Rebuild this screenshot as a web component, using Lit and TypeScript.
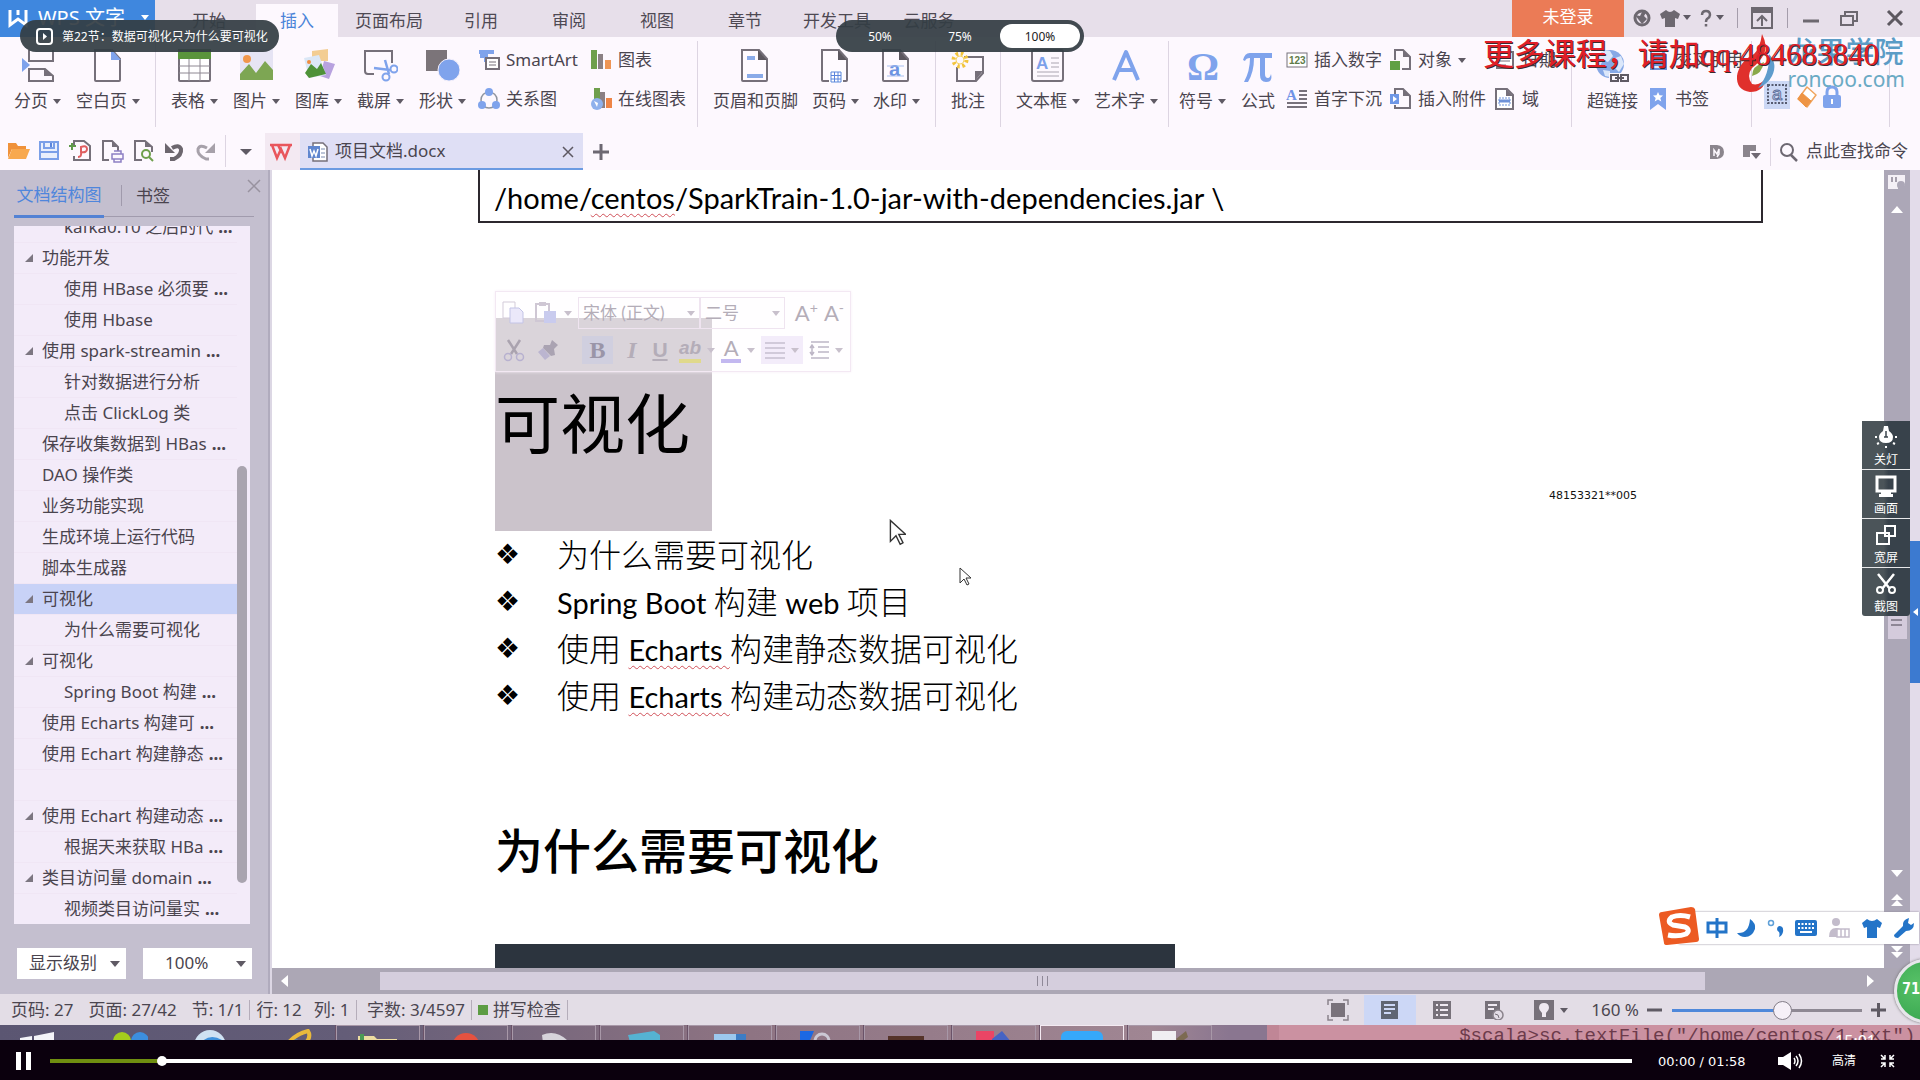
import { LitElement, html, css, svg, nothing, TemplateResult } from "lit";
import { customElement } from "lit/decorators.js";
import { classMap } from "lit/directives/class-map.js";

const pic = (w: number, h: number, body: unknown) =>
  html`<svg class="pic" width=${w} height=${h} viewBox="0 0 ${w} ${h}" fill="none" aria-hidden="true">${body}</svg>`;

const G = "#76707a";
const B = "#7fa3ec";

const page = svg`<path d="M2 1h17l8 9v21q0 1-1 1H3q-1 0-1-1z" fill="#fffaff" stroke=${G} stroke-width="2"/>`;

const big: Record<string, TemplateResult> = {
  split: pic(34, 34, svg`<path d="M8 1v11h24V1M8 32V20h16l8 7v5z" stroke=${G} stroke-width="2"/><path d="M23 20v7h9" fill=${G}/><path d="M1 9l8 7-8 7z" fill=${B}/>`),
  blank: pic(30, 34, svg`${page}<path d="M18 0l10 11H18z" fill=${B}/>`),
  table: pic(34, 34, svg`<rect x="1" y="1" width="31" height="31" rx="1" fill="#fff" stroke=${G} stroke-width="2"/><path d="M0 0h33v10H0z" fill="#5a943c"/><path d="M1 17h31M1 24h31M11 10v22M22 10v22" stroke="#8e8892"/>`),
  image: pic(34, 34, svg`<path d="M0 0h33v31H0z" fill="#e6e4f4"/><circle cx="7" cy="10" r="4" fill="#f0964c"/><path d="M0 31V25l9-10 7 9 9-12 8 9v10z" fill="#7da653"/>`),
  gallery: pic(34, 34, svg`<path d="M10 2l16-2 0 12H10z" fill="#f3cd92"/><path d="M22 12l11 3-6 15-9-3z" fill="#b8a2df"/><path d="M2 9l15-3 7 20-17 3z" fill="#dbe7f6"/><path d="M3 24l6-9 6 5 4-6 5 11-17 4z" fill="#4e9238"/><circle cx="7" cy="13" r="2" fill="#f08c40"/>`),
  snap: pic(34, 34, svg`<path d="M10 25H4q-3 0-3-3V2h27v12" stroke=${G} stroke-width="2"/><path d="M10 19l16 2M21 11l4 14" stroke=${B} stroke-width="2.5"/><circle cx="30" cy="20" r="3.5" stroke=${B} stroke-width="2"/><circle cx="22" cy="28" r="3.5" stroke=${B} stroke-width="2"/>`),
  shapes: pic(34, 34, svg`<path d="M0 1h21v21H0z" fill="#7b7479"/><circle cx="23" cy="21" r="11" fill=${B} stroke="#f5f0fb"/>`),
  header: pic(30, 34, svg`${page}<path d="M18 1v10h9z" fill="#5c575f"/><path d="M7 7h8v4H7zM7 25h16v4H7z" fill="#8aaae8"/>`),
  pageno: pic(30, 34, svg`${page}<path d="M18 1v10h9z" fill="#5c575f"/><path d="M9 21h14v13H9z" fill="#fff"/><path d="M11 23h10v10H11zM14.500 23v10M18 23v10M11 26.500h10M11 30h10" stroke="#5b86dc"/>`),
  water: pic(30, 34, svg`${page}<path d="M18 1v10h9z" fill="#5c575f"/><text x="8" y="27" font-family="Liberation Sans" font-size="20" font-weight="700" fill="#6c93e2">a</text><path d="M6 17h17M6 27h17" stroke="#a9bff0"/>`),
  note: pic(34, 34, svg`<path d="M13 8h19v16l-7 8H6V18" stroke=${G} stroke-width="2"/><path d="M32 22h-8v10z" fill=${G}/><circle cx="9" cy="11" r="6.500" stroke="#f2c43c" stroke-width="4" stroke-dasharray="2.500 2.600"/><circle cx="9" cy="11" r="4" stroke="#f6d568"/>`),
  textbox: pic(34, 34, svg`<rect x="1" y="1" width="31" height="31" rx="2" fill="#fdf8fe" stroke=${G} stroke-width="2"/><text x="5" y="20" font-family="Liberation Sans" font-size="17" font-weight="700" fill="#7da0ea">A</text><path d="M20 9h8M20 14h8M20 18h8M6 23h22M6 27h22" stroke="#aaa4b0"/>`),
  wordart: pic(30, 34, svg`<path d="M3 31L15 3l12 28M8 21h14" stroke=${B} stroke-width="4" stroke-linejoin="round"/>`),
  omega: pic(34, 34, svg`<text x="2" y="31" font-family="Liberation Serif" font-size="40" font-weight="700" fill="#7fa3ec">Ω</text>`),
  pi: pic(34, 34, svg`<path d="M2 11Q4 3 10 4h21v5h-7v16q0 4 3 4 2 0 3-4 2 8-5 8-6 0-6-7V9h-6q0 14-6 24H3Q9 22 9 9 5 9 4 12z" fill=${B}/>`),
  link: pic(34, 34, svg`<circle cx="15" cy="15" r="14" fill="#86a8e6"/><path d="M5 5q6-5 10-3l3 5-5 6-5-2-3 6-3-5zM20 9l6-2 3 8-5 8-5-5zM8 21l7 1 0 6-5-1z" fill="#dbe7fa"/><path d="M14 24h20v10H14z" fill="#fbf6fe"/><path d="M16 26h7v6h-7zM26 26h7v6h-7zM20 29h9" stroke="#5f5a64" stroke-width="2"/>`),
};

const small: Record<string, TemplateResult> = {
  smartart: pic(22, 22, svg`<path d="M1 3h15M8 3v8h6M4 3v6" stroke=${B} stroke-width="4"/><path d="M8 9h13v11H8z" fill="#fff" stroke=${G} stroke-width="2"/><path d="M11 13h7M11 16h7" stroke=${G}/>`),
  relation: pic(22, 22, svg`<circle cx="11" cy="12" r="8" stroke="#8f959f" stroke-width="1.500"/><circle cx="11" cy="4" r="4" fill=${B}/><circle cx="4" cy="17" r="4" fill=${B}/><circle cx="18" cy="17" r="4" fill=${B}/>`),
  chart: pic(22, 22, svg`<path d="M1 1h6v19H1z" fill="#6f9f4c"/><path d="M8 5h5v15H8z" fill="#8b8084"/><path d="M15 11h6v9h-6z" fill="#ee9555"/>`),
  online: pic(22, 22, svg`<path d="M4 0h6v11H4z" fill="#6f9f4c"/><path d="M10 4h5v16h-5z" fill="#8b8084"/><path d="M16 10h6v10h-6z" fill="#ee8547"/><circle cx="7" cy="16" r="6" fill="#8fb1ec"/><path d="M4 13l4 2-1 4z" fill="#fff"/>`),
  num: pic(22, 22, svg`<rect x="1" y="4" width="20" height="14" fill="#fff" stroke=${G}/><text x="3" y="15" font-family="Liberation Sans" font-size="10" font-weight="700" fill="#5e7b48">123</text>`),
  drop: pic(22, 22, svg`<text x="0" y="12" font-family="Liberation Serif" font-size="15" font-weight="700" fill="#6f93e6">A</text><path d="M13 3h8M13 7h8M13 11h8M1 15h20M1 19h20" stroke="#77717b" stroke-width="2"/>`),
  object: pic(22, 22, svg`<path d="M5 11V1h8l7 7v12h-8" stroke=${G} stroke-width="2"/><path d="M13 1v7h7z" fill=${G}/><path d="M0 12h10v9H0z" fill="#5fa044"/>`),
  attach: pic(22, 22, svg`<path d="M5 6V1h8l7 7v12H5v-3" stroke=${G} stroke-width="2"/><path d="M13 1v7h7z" fill=${G}/><path d="M0 6h9v10H0z" fill="#6f97e6"/><path d="M3 8l4 3-4 3z" fill="#fff"/>`),
  date: pic(22, 22, svg`<rect x="3" y="3" width="16" height="16" fill="#fff" stroke=${G} stroke-width="2"/><path d="M6 8h10M6 12h10M6 16h6" stroke=${G}/>`),
  field: pic(22, 22, svg`<path d="M2 1h11l6 6v14H2z" fill="#fff" stroke=${G} stroke-width="2"/><path d="M12 1v7h7z" fill=${G}/><path d="M5 10h11v7H5z" stroke="#6d91d8" stroke-dasharray="2 1"/><path d="M5 13h11" stroke="#6d91d8" stroke-width="3"/>`),
  xref: pic(22, 22, svg`<path d="M4 1h10l5 5v14H4z" fill="#e7edfb" stroke="#6d91d8" stroke-width="2"/><path d="M7 8h9M7 12h9M7 16h9" stroke="#6d91d8" stroke-width="2"/>`),
  mark: pic(22, 22, svg`<path d="M3 0h16v22l-8-6-8 6z" fill=${B}/><path d="M11 4l1.500 3.300 3.500.3-2.700 2.300 1 3.600-3.300-2-3.300 2 1-3.600L6 7.600l3.500-.3z" fill="#fff"/>`),
  shade: pic(26, 28, svg`<path d="M0 0h26v28H0z" fill="#ccd8f5"/><rect x="4" y="4" width="18" height="18" stroke="#565b70" stroke-width="2" stroke-dasharray="2 1.500"/><text x="8" y="19" font-family="Liberation Sans" font-size="18" fill="#fff" stroke="#5c6f9e" stroke-width="1">a</text>`),
  eraser: pic(22, 24, svg`<path d="M12 2l9 8-9 12-9-8z" fill="#fff" stroke="#f0a45e" stroke-width="1.500" stroke-linejoin="round"/><path d="M7 8l9 8-5 6-8-8z" fill="#ee9444" stroke="#ee9444" stroke-linejoin="round"/>`),
  lock: pic(20, 24, svg`<path d="M5 11V7q0-5 5-5t5 5v4" stroke=${B} stroke-width="3"/><rect x="1" y="10" width="18" height="13" rx="2" fill=${B}/><path d="M9 14h2v5H9z" fill="#fff"/>`),
};

const quick: [string, TemplateResult][] = [
  ["打开", pic(24, 24, svg`<path d="M2 4h8l2 3h8v3H6L2 19z" fill="#f0923a"/><path d="M6 10h18l-4 10H2z" fill="#f8a94f"/>`)],
  ["保存", pic(22, 24, svg`<rect x="2" y="3" width="18" height="17" stroke="#7ba0e8" stroke-width="2" fill="#eaf0fc"/><path d="M6 3h10v6H6zM3 13h16" stroke="#7ba0e8" stroke-width="2"/><path d="M12 4h2v4h-2z" fill="#5b86dc"/>`)],
  ["输出为PDF", pic(24, 24, svg`<path d="M6 8V2h10l6 5v14H6v-4" stroke=${G} stroke-width="2"/><path d="M1 7h7M4 4v7" stroke="#5f9a4a" stroke-width="2"/><path d="M10 18q4 0 3-5V8q6-2 6 2 0 4-6 3" stroke="#df5d60" stroke-width="2"/>`)],
  ["打印", pic(24, 24, svg`<path d="M9 21H3V2h9l6 6v4" stroke=${G} stroke-width="2"/><path d="M12 2v6h6z" fill=${G}/><path d="M12 15h11v5H12zM14 12h7v3M14 20h7v3h-7z" stroke="#8d7fc4" stroke-width="1.500"/>`)],
  ["打印预览", pic(24, 24, svg`<path d="M10 21H3V2h10l7 6v5" stroke=${G} stroke-width="2"/><path d="M13 2v6h7z" fill=${G}/><circle cx="14" cy="15" r="4" stroke="#6fa04c" stroke-width="2"/><path d="M17 18l4 4" stroke="#6fa04c" stroke-width="2"/>`)],
  ["撤销", pic(22, 24, svg`<path d="M6 20h4q8-4 7-10-2-5-9-1" stroke="#6c666e" stroke-width="4"/><path d="M1 4v10h10z" fill="#6c666e"/>`)],
  ["重做", pic(22, 24, svg`<path d="M15 20h-3q-9-4-8-10 2-5 9-1" stroke="#a7a1aa" stroke-width="3"/><path d="M21 4v10H11z" fill="#a7a1aa"/>`)],
];

interface OutlineRow { t: string; lvl: number; open?: boolean; more?: boolean; sel?: boolean; }
const outline: OutlineRow[] = [
  { t: "kafka0.10 之后的代", lvl: 2, more: true },
  { t: "功能开发", lvl: 1, open: true },
  { t: "使用 HBase 必须要", lvl: 2, more: true },
  { t: "使用 Hbase", lvl: 2 },
  { t: "使用 spark-streamin", lvl: 1, open: true, more: true },
  { t: "针对数据进行分析", lvl: 2 },
  { t: "点击 ClickLog 类", lvl: 2 },
  { t: "保存收集数据到 HBas", lvl: 1, more: true },
  { t: "DAO 操作类", lvl: 1 },
  { t: "业务功能实现", lvl: 1 },
  { t: "生成环境上运行代码", lvl: 1 },
  { t: "脚本生成器", lvl: 1 },
  { t: "可视化", lvl: 1, open: true, sel: true },
  { t: "为什么需要可视化", lvl: 2 },
  { t: "可视化", lvl: 1, open: true },
  { t: "Spring Boot 构建", lvl: 2, more: true },
  { t: "使用 Echarts 构建可", lvl: 1, more: true },
  { t: "使用 Echart 构建静态", lvl: 1, more: true },
  { t: "", lvl: 1 },
  { t: "使用 Echart 构建动态", lvl: 1, open: true, more: true },
  { t: "根据天来获取 HBa", lvl: 2, more: true },
  { t: "类目访问量 domain", lvl: 1, open: true, more: true },
  { t: "视频类目访问量实", lvl: 2, more: true },
];

const base = css`
  * { box-sizing: border-box; }
  :host { display: block; }
  button { font: inherit; color: inherit; background: none; border: 0; padding: 0; margin: 0; white-space: nowrap; }
  ul { list-style: none; margin: 0; padding: 0; }
  .pic { display: block; flex: none; }
  .caret { flex: none; width: 0; height: 0; border: 4px solid transparent; border-top: 5px solid #5f5a64; border-bottom: 0; }
`;

@customElement("title-bar")
class TitleBar extends LitElement {
  static styles = [base, css`
    .bar { display: flex; height: 37px; background: #e7dfea; color: #4e4953; }
    .brand { width: 155px; flex: none; background: #3f87de; color: #fff; display: flex; align-items: center; gap: 8px; padding: 0 6px 2px 8px; font-size: 20px; }
    .brand .caret { border-top-color: #fff; margin-left: auto; }
    .tabs { display: flex; gap: 6px; margin-left: 13px; padding-top: 4px; flex: 1; }
    .tab { min-width: 82px; padding: 2px 11px 0; text-align: center; }
    .on { background: #fdf8fe; color: #4a83d8; }
    .login { width: 112px; background: #eb7b56; color: #fff; padding-bottom: 3px; }
    .tools { display: flex; align-items: center; padding: 0 16px 2px 8px; }
    .tools button { display: flex; align-items: center; gap: 3px; }
    .a { margin-left: 12px; } .b { margin-left: 14px; } .c { margin-left: 8px; }
    .vsep { width: 1px; height: 20px; background: #a59dab; margin-left: 13px; }
    .gap { margin-left: 20px; } .wide { margin-left: 28px; }
  `];
  render() {
    const tabs = ["开始", "插入", "页面布局", "引用", "审阅", "视图", "章节", "开发工具", "云服务"];
    return html`<header class="bar">
      <button class="brand">${pic(22, 20, svg`<path d="M2 2v15l8-6 8 6V2M10 2v5" stroke="#fff" stroke-width="3"/>`)}<span>WPS 文字</span><i class="caret"></i></button>
      <nav class="tabs">${tabs.map((t, i) => html`<button class=${classMap({ tab: true, on: i === 1 })}>${t}</button>`)}</nav>
      <button class="login">未登录</button>
      <div class="tools">
        <button aria-label="云同步">${pic(20, 20, svg`<circle cx="10" cy="10" r="7" stroke="#6d6870" stroke-width="3"/><path d="M3 7l5 1 2-4 5-1-3 5 3 3-5 5z" fill="#6d6870"/>`)}</button>
        <button class="c" aria-label="皮肤">${pic(20, 20, svg`<path d="M6 2q4 4 8 0l6 4-2 5-3-1v9H5v-9l-3 1-2-5z" fill="#6d6870"/>`)}<i class="caret"></i></button>
        <button class="c" aria-label="帮助">${pic(14, 20, svg`<path d="M3 7q0-4 4-4t4 4q0 2-3 4-1 1-1 3M7 16v2.500" stroke="#6d6870" stroke-width="2.500"/>`)}<i class="caret"></i></button>
        <i class="vsep"></i>
        <button class="a" aria-label="隐藏功能区">${pic(24, 24, svg`<rect x="2" y="2" width="20" height="20" stroke="#6d6870" stroke-width="2"/><path d="M2 2h20v5H2z" fill="#6d6870"/><path d="M12 20V11M7 15l5-5 5 5" stroke="#6d6870" stroke-width="2"/>`)}</button>
        <i class="vsep"></i>
        <button class="b" aria-label="最小化">${pic(18, 20, svg`<path d="M1 13h16" stroke="#6d6870" stroke-width="3"/>`)}</button>
        <button class="gap" aria-label="还原">${pic(18, 20, svg`<path d="M5 7V4h12v9h-4M1 8h12v9H1z" stroke="#6d6870" stroke-width="2"/>`)}</button>
        <button class="wide" aria-label="关闭">${pic(18, 20, svg`<path d="M2 3l14 14M16 3L2 17" stroke="#5d5860" stroke-width="3"/>`)}</button>
      </div>
    </header>`;
  }
}

@customElement("ribbon-bar")
class RibbonBar extends LitElement {
  static styles = [base, css`
    .ribbon { display: flex; height: 96px; background: #fdf8fe; color: #4a454f; padding: 4px 0 6px 14px; }
    .grp { display: flex; gap: 15px; padding-right: 15px; margin-right: 15px; border-right: 1px solid #ddd5e2; flex: none; }
    .snug { gap: 14px; }
    .tight { padding-right: 10px; margin-right: 10px; gap: 14px; }
    .nosep { border: 0; margin: 0; padding-right: 11px; }
    .close { gap: 12px; padding-right: 12px; margin-right: 12px; }
    .big { display: flex; flex-direction: column; align-items: center; gap: 6px; padding-top: 8px; justify-content: flex-start; }
    .lab { display: flex; align-items: center; gap: 5px; line-height: 24px; }
    .cols { display: grid; grid-template-rows: 38px 40px; grid-auto-flow: column; column-gap: 12px; align-content: start; margin: 0 -4px 0 -3px; }
    .sm { display: flex; align-items: center; gap: 6px; }
    .flush { margin: 0; column-gap: 8px; }
    .icons { display: flex; gap: 5px; align-items: flex-end; padding-bottom: 18px; margin-right: 32px; }
  `];
  big(name: string, label: string, caret = true) {
    return html`<button class="big">${big[name]}<span class="lab">${label}${caret ? html`<i class="caret"></i>` : nothing}</span></button>`;
  }
  sm(name: string, label: string, caret = false) {
    return html`<button class="sm">${small[name]}<span>${label}</span>${caret ? html`<i class="caret"></i>` : nothing}</button>`;
  }
  render() {
    return html`<section class="ribbon">
      <div class="grp">${this.big("split", "分页")}${this.big("blank", "空白页")}</div>
      <div class="grp">${this.big("table", "表格")}${this.big("image", "图片")}${this.big("gallery", "图库")}${this.big("snap", "截屏")}${this.big("shapes", "形状")}
        <div class="cols">${this.sm("smartart", "SmartArt")}${this.sm("relation", "关系图")}${this.sm("chart", "图表")}${this.sm("online", "在线图表")}</div></div>
      <div class="grp snug">${this.big("header", "页眉和页脚", false)}${this.big("pageno", "页码")}${this.big("water", "水印")}</div>
      <div class="grp">${this.big("note", "批注", false)}</div>
      <div class="grp tight">${this.big("textbox", "文本框")}${this.big("wordart", "艺术字")}</div>
      <div class="grp nosep">${this.big("omega", "符号")}${this.big("pi", "公式", false)}</div>
      <div class="grp snug"><div class="cols flush">${this.sm("num", "插入数字")}${this.sm("drop", "首字下沉")}${this.sm("object", "对象", true)}${this.sm("attach", "插入附件")}${this.sm("date", "日期")}${this.sm("field", "域")}</div></div>
      <div class="grp close">${this.big("link", "超链接", false)}<div class="cols">${this.sm("xref", "交叉引用")}${this.sm("mark", "书签")}</div></div>
      <div class="grp"><div class="icons"><button aria-label="字符底纹">${small.shade}</button><button aria-label="清除">${small.eraser}</button><button aria-label="保护">${small.lock}</button></div></div>
    </section>`;
  }
}

@customElement("file-tabs")
class FileTabs extends LitElement {
  static styles = [base, css`
    .row { display: flex; align-items: stretch; height: 37px; background: #fdf8fe; color: #4a454f; }
    .quick { display: flex; align-items: center; gap: 8px; padding: 0 10px 0 6px; border-right: 1px solid #ddd5e2; margin: 2px 0 3px; width: 226px; flex: none; }
    .more { width: 39px; display: flex; align-items: center; justify-content: center; flex: none; }
    .more .caret { border-width: 6px 6px 0; }
    .home { width: 35px; background: #f3e9f2; display: flex; align-items: center; padding-left: 4px; flex: none; }
    .doc { width: 283px; flex: none; display: flex; align-items: center; gap: 7px; padding: 2px 8px 0; background: #dfdff5; border-bottom: 2px solid #6b9be2; }
    .doc .x { margin-left: auto; }
    .plus { margin-left: 9px; }
    .right { margin-left: auto; display: flex; align-items: center; padding-right: 12px; }
    .flag { margin-left: 18px; }
    .find { display: flex; align-items: center; gap: 8px; border-left: 1px solid #ddd5e2; margin-left: 9px; padding-left: 8px; height: 28px; }
  `];
  render() {
    return html`<div class="row">
      <div class="quick">${quick.map(([n, p]) => html`<button aria-label=${n}>${p}</button>`)}</div>
      <button class="more" aria-label="更多"><i class="caret"></i></button>
      <button class="home" aria-label="首页">${pic(24, 20, svg`<path d="M3 3l5 13 4-9 4 9 5-13M1 3h22M9 3l4 8" stroke="#e9565c" stroke-width="2.500"/>`)}</button>
      <div class="doc">${pic(20, 22, svg`<path d="M5 2h10l4 4v14H5z" fill="#fff" stroke=${G} stroke-width="1.500"/><path d="M13 8h4M13 12h4M13 16h4" stroke="#7b8cb0"/><path d="M0 5h12v12H0z" fill="#5f86cf"/><path d="M2 8l2 7 2-5 2 5 2-7" stroke="#fff" stroke-width="1.500"/>`)}<span>项目文档.docx</span>
        <button class="x" aria-label="关闭文档">${pic(14, 14, svg`<path d="M2 2l10 10M12 2L2 12" stroke="#5d5862" stroke-width="1.500"/>`)}</button></div>
      <button class="plus" aria-label="新建">${pic(18, 18, svg`<path d="M9 1v16M1 9h16" stroke="#6d6872" stroke-width="3"/>`)}</button>
      <div class="right">
        <button aria-label="稻壳">${pic(16, 18, svg`<path d="M1 2h7q7 1 7 7t-7 7H1z" fill="#8b858d"/><path d="M5 13V7l3 4 2-5v5l-2 3" stroke="#fdf8fe" stroke-width="1.500"/>`)}</button>
        <button class="flag" aria-label="窗口">${pic(18, 18, svg`<path d="M0 2h13v6H7v6H0z" fill="#8b858d"/><path d="M8 10h10l-5 6z" fill="#6f6973"/>`)}</button>
        <button class="find">${pic(19, 20, svg`<circle cx="8" cy="8" r="6" stroke="#6d6872" stroke-width="2"/><path d="M12 13l6 6" stroke="#6d6872" stroke-width="2.500"/>`)}<span>点此查找命令</span></button>
      </div>
    </div>`;
  }
}

@customElement("outline-panel")
class OutlinePanel extends LitElement {
  static styles = [base, css`
    :host { flex: none; display: flex; }
    .side { width: 272px; display: flex; flex-direction: column; background: #c4bfcf; color: #4a444e; border-right: 2px solid #dcd7e4; padding: 8px 4px 15px 14px; box-shadow: inset -2px 0 0 #b0abbd; }
    .head { display: flex; align-items: flex-start; height: 37px; margin-right: 11px; }
    .t { height: 37px; padding: 0 2px 2px; }
    .cur { color: #4f86dc; width: 90px; }
    .mid { border-left: 1px solid #a09aac; margin: 7px 0 0 17px; padding-left: 14px; height: 21px; line-height: 21px; }
    .close { margin-left: auto; margin-right: -7px; }
    .rule { height: 3px; background: linear-gradient(#a19bad, #a19bad) 0 1px / 100% 1px no-repeat; margin-right: 12px; flex: none; }
    .rule i { display: block; width: 90px; height: 3px; background: #5382d4; }
    .box { flex: 1; min-height: 0; margin: 8px 0 24px; width: 236px; background: #f3ebf9; overflow: hidden; display: flex; }
    .list { flex: 1; margin-top: -14px; }
    .row { height: 31px; display: flex; align-items: center; gap: 9px; padding-left: 11px; white-space: nowrap; border-bottom: 1px solid #f0e6f5; }
    .row button { display: flex; gap: 5px; }
    .mark { width: 0; height: 0; border-left: 8px solid transparent; border-bottom: 8px solid transparent; }
    .open { border-bottom-color: #7c7681; }
    .two { padding-left: 33px; }
    .sel { background: #c8d2f7; }
    .dots { font-weight: 700; }
    .rail { width: 13px; padding: 240px 3px 41px 0; flex: none; display: flex; }
    .thumb { flex: 1; border-radius: 5px; background: #a9a4af; }
    .foot { display: flex; gap: 17px; padding-left: 3px; flex: none; }
    .sel-box { position: relative; width: 109px; height: 31px; background: #fff; display: flex; }
    .sel-box select { appearance: none; border: 0; background: none; font: inherit; color: inherit; flex: 1; padding: 0 12px; }
    .num select { padding-left: 22px; }
    .sel-box .caret { position: absolute; right: 6px; top: 13px; border-width: 6px 5px 0; }
  `];
  render() {
    return html`<aside class="side">
      <div class="head"><button class="t cur">文档结构图</button><button class="mid">书签</button>
        <button class="close" aria-label="关闭窗格">${pic(16, 16, svg`<path d="M2 2l12 12M14 2L2 14" stroke="#98929f" stroke-width="1.500"/>`)}</button></div>
      <div class="rule"><i></i></div>
      <div class="box">
        <ul class="list">${outline.map(r => html`<li class=${classMap({ row: true, two: r.lvl === 2, sel: !!r.sel })}>
          <i class=${classMap({ mark: true, open: !!r.open })}></i><button>${r.t}${r.more ? html`<span class="dots">...</span>` : nothing}</button></li>`)}</ul>
        <div class="rail"><i class="thumb"></i></div>
      </div>
      <div class="foot">
        <label class="sel-box"><select aria-label="显示级别"><option>显示级别</option></select><i class="caret"></i></label>
        <label class="sel-box num"><select aria-label="缩放"><option>100%</option></select><i class="caret"></i></label>
      </div>
    </aside>`;
  }
}

@customElement("mini-toolbar")
class MiniToolbar extends LitElement {
  static styles = [base, css`
    .mini { width: 356px; background: rgba(255, 252, 255, .3); border: 1px solid #f3e8f3; color: #b4adb8; padding: 4px 6px; display: flex; flex-direction: column; gap: 3px; box-shadow: 0 0 3px #f7eef7; }
    .r { display: flex; align-items: center; height: 34px; gap: 6px; }
    .f { display: flex; align-items: center; justify-content: space-between; height: 32px; border: 1px solid #efe4f0; padding: 0 4px; }
    .f1 { width: 124px; } .f2 { width: 86px; margin-left: -6px; }
    .caret { border-top-color: #c8c0cc; }
    .sp { margin-left: 4px; }
    .b { width: 31px; height: 28px; font: 700 24px "Liberation Serif", serif; background: rgba(200, 202, 228, .55); color: #9a95a8; margin: 0 1px 0 16px; }
    .i { width: 24px; font: italic 700 24px "Liberation Serif", serif; }
    .u { width: 20px; font: 700 21px "Liberation Sans", sans-serif; text-decoration: underline; }
    .al { display: flex; align-items: center; gap: 6px; background: #f3ecfa; padding: 3px 4px; height: 28px; }
    .A { font-size: 22px; }
    .A sup { font-size: 14px; line-height: 1; }
    .fc { border-bottom: 4px solid #c3b8f0; line-height: 22px; width: 20px; font-size: 22px; }
    .hl { border-bottom: 4px solid #e0d98c; line-height: 20px; font: italic 700 19px "Liberation Sans", sans-serif; margin-left: 3px; }
  `];
  render() {
    return html`<div class="mini">
      <div class="r">
        <button aria-label="复制">${pic(22, 24, svg`<path d="M1 1h12v16H1z" stroke="#d3cbd9"/><path d="M8 7h9l4 4v11H8z" fill="#ebe8fa" stroke="#c3c4e6"/>`)}</button>
        <button class="sp" aria-label="粘贴">${pic(24, 24, svg`<path d="M2 3h13v17H2z" stroke="#cfc7d4" stroke-width="2"/><path d="M5 1h7v4H5z" fill="#cfc7d4"/><path d="M10 10h12v12H10z" fill="#c9cbee"/>`)}</button><i class="caret"></i>
        <button class="f f1"><span>宋体 (正文)</span><i class="caret"></i></button>
        <button class="f f2"><span>二号</span><i class="caret"></i></button>
        <button class="A sp">A<sup>+</sup></button><button class="A">A<sup>-</sup></button>
      </div>
      <div class="r">
        <button aria-label="剪切">${pic(24, 24, svg`<path d="M6 2l9 14M18 2L9 16" stroke="#aaa3af" stroke-width="2.500"/><circle cx="6" cy="19" r="3.500" stroke="#b7b1cf" stroke-width="1.500"/><circle cx="18" cy="19" r="3.500" stroke="#b7b1cf" stroke-width="1.500"/>`)}</button>
        <button class="sp" aria-label="格式刷">${pic(24, 24, svg`<path d="M16 2l6 5-4 4 1 6-4 1-8-8 1-3 6 0z" fill="#aaa3b2"/><path d="M7 10l7 8-5 4-7-8z" fill="#bbb5d0"/>`)}</button>
        <button class="b">B</button><button class="i">I</button><button class="u">U</button>
        <button class="hl">ab</button><i class="caret"></i>
        <button class="fc">A</button><i class="caret"></i>
        <button class="al" aria-label="对齐">${pic(20, 18, svg`<path d="M0 2h20M0 7h20M0 12h20M0 17h20" stroke="#c6bfd0" stroke-width="1.500"/>`)}<i class="caret"></i></button>
        <button aria-label="行距">${pic(20, 20, svg`<path d="M2 2h18M9 7h11M9 12h11M2 18h18M3 5v9M1 8l2-3 2 3M1 12l2 3 2-3" stroke="#bdb6c6" stroke-width="1.500"/>`)}</button><i class="caret"></i>
      </div>
    </div>`;
  }
}

@customElement("doc-view")
class DocView extends LitElement {
  static styles = [base, css`
    :host { flex: 1; min-width: 0; display: flex; }
    .view { flex: 1; min-width: 0; display: grid; grid-template-columns: minmax(0, 1fr) 26px; grid-template-rows: minmax(0, 1fr) 26px; }
    .paper { position: relative; background: #fff; overflow: hidden; color: #000; padding: 0 121px 0 206px; font-family: Lato, "Noto Sans CJK SC", sans-serif; }
    .cell { height: 53px; border: 2px solid #2c282e; border-top: 0; padding: 5px 0 0 14px; font-size: 29px; line-height: 46px; white-space: nowrap; }
    .bad { text-decoration: underline wavy #d05058 1px; text-underline-offset: 4px; }
    .h1 { margin: 95px 0 0 17px; width: 217px; height: 213px; background: #cbc3cb; font: 400 65px "Noto Sans CJK SC", sans-serif; line-height: 205px; white-space: nowrap; }
    .items { margin-left: 17px; font-size: 32px; }
    .items li { display: flex; align-items: center; height: 47px; white-space: pre; }
    .dot { width: 62px; font: 28px "DejaVu Sans", sans-serif; }
    .cn { font-weight: 300; }
    .la { font-size: 29px; font-weight: 400; }
    .h2 { margin: 99px 0 66px 17px; font: 500 48px "Noto Sans CJK SC", sans-serif; line-height: 60px; }
    .fig { margin-left: 17px; width: 680px; height: 60px; background: #2c343e; }
    .mini { position: absolute; left: 223px; top: 121px; }
    .cursor { position: absolute; left: 617px; top: 349px; }
    .cursor.sm { left: 687px; top: 397px; }
    .vs { display: flex; flex-direction: column; align-items: center; background: #aca7b7; padding: 5px 0 0; }
    .tri { width: 0; height: 0; border: 6px solid transparent; }
    .up { border-bottom: 7px solid #fff; border-top: 0; }
    .dn { border-top: 7px solid #fff; border-bottom: 0; }
    .vthumb { margin-top: auto; width: 19px; height: 60px; background: #d4cbdc; display: flex; align-items: flex-end; justify-content: center; padding-bottom: 12px; }
    .m1 { margin-top: 15px; } .m2 { margin-top: 231px; } .m3 { margin-top: 16px; } .m4 { margin: 38px 0 9px; }
    .hs { grid-column: 1 / -1; display: flex; align-items: center; background: #aca7b5; padding: 0 36px 0 9px; }
    .l { border-right: 7px solid #fff; border-left: 0; }
    .r { border-left: 7px solid #fff; border-right: 0; margin-left: auto; }
    .hthumb { margin-left: 92px; flex: 0 1 1325px; height: 18px; background: #d5cedd; display: flex; gap: 4px; align-items: center; justify-content: center; }
    .hthumb i { width: 1px; height: 10px; background: #8f8998; }
  `];
  render() {
    const arrow = (s: number) => pic(12 * s, 20 * s, svg`<path transform="scale(${s})" d="M1 1v15l4-4 3 6 2-1-3-6h5z" fill="#fff" stroke="#333" stroke-width="1"/>`);
    const dbl = (d: string) => pic(12, 14, svg`<path d=${d} fill="#fff"/>`);
    return html`<div class="view">
      <main class="paper">
        <div class="cell">/home/<span class="bad">centos</span>/SparkTrain-1.0-jar-with-dependencies.jar \\</div>
        <h1 class="h1">可视化</h1>
        <ul class="items">
          <li><span class="dot">❖</span><span class="cn">为什么需要可视化</span></li>
          <li><span class="dot">❖</span><span class="cn"><span class="la">Spring Boot </span>构建<span class="la"> web </span>项目</span></li>
          <li><span class="dot">❖</span><span class="cn">使用<span class="la"> <span class="bad">Echarts </span></span>构建静态数据可视化</span></li>
          <li><span class="dot">❖</span><span class="cn">使用<span class="la"> <span class="bad">Echarts </span></span>构建动态数据可视化</span></li>
        </ul>
        <h2 class="h2">为什么需要可视化</h2>
        <div class="fig"></div>
        <mini-toolbar class="mini"></mini-toolbar>
        <div class="cursor">${arrow(1.4)}</div>
        <div class="cursor sm">${arrow(1)}</div>
      </main>
      <div class="vs">
        ${pic(18, 16, svg`<path d="M0 0h17v14H0z" fill="#f4f0f6"/><path d="M4 2v5M8 2v5" stroke="#8a8494" stroke-width="1.500"/><circle cx="13" cy="10" r="4" fill="#aca7b7"/><path d="M10 11h8v5h-8z" fill="#aca7b7"/>`)}
        <i class="tri up m1"></i>
        <i class="vthumb">${pic(12, 8, svg`<path d="M0 1h11M0 6h11" stroke="#77717f" stroke-width="1.500"/>`)}</i>
        <i class="tri dn m2"></i>
        <i class="m3">${dbl("M6 1l6 6H0zM6 7l6 6H0z")}</i>
        <i class="m4">${dbl("M0 1h12L6 7zM0 7h12l-6 6z")}</i>
      </div>
      <div class="hs"><i class="tri l"></i><div class="hthumb"><i></i><i></i><i></i></div><i class="tri r"></i></div>
    </div>`;
  }
}

@customElement("status-bar")
class StatusBar extends LitElement {
  static styles = [base, css`
    .bar { display: flex; align-items: center; height: 31px; background: #e3dde6; color: #4b4650; padding: 1px 34px 0 11px; white-space: pre; }
    .s { border-right: 1px solid #b5adba; height: 20px; line-height: 20px; padding-right: 6px; margin-right: 6px; display: flex; gap: 12px; align-items: center; }
    .wide { gap: 15px; }
    .sp { gap: 5px; }
    .ok { width: 10px; height: 10px; background: #5d9c44; }
    .r { margin-left: auto; display: flex; align-items: center; height: 100%; }
    .view { width: 52px; height: 31px; display: flex; align-items: center; justify-content: center; gap: 6px; }
    .drop { width: 62px; }
    .on { background: #ccd7f6; }
    .pct { margin: 0 8px 0 9px; }
    .zoom { appearance: none; width: 190px; height: 20px; margin: 0 9px 0 10px; background: linear-gradient(90deg, #4f88da 57%, #8e8893 57%) center / 100% 3px no-repeat; }
    .zoom::-webkit-slider-thumb { appearance: none; width: 19px; height: 19px; border-radius: 50%; background: #f6f0f8; border: 1px solid #837d88; }
  `];
  render() {
    const v = (n: string, on: boolean, p: TemplateResult, c = false) => html`<button class=${classMap({ view: true, on, drop: c })} aria-label=${n}>${p}${c ? html`<i class="caret"></i>` : nothing}</button>`;
    return html`<footer class="bar">
      <span class="s wide"><span>页码: 27</span><span>页面: 27/42</span><span>节: 1/1</span></span>
      <span class="s"><span>行: 12</span><span>列: 1</span></span>
      <span class="s"><span> 字数: 3/4597</span></span>
      <span class="s sp"><i class="ok"></i><span>拼写检查</span></span>
      <div class="r">
        ${v("全屏", false, pic(22, 22, svg`<path d="M1 6V1h5M16 1h5v5M21 16v5h-5M6 21H1v-5" stroke="#8a838c" stroke-width="1.500"/><path d="M4 4h14v14H4z" fill="#79727b"/>`))}
        ${v("页面", true, pic(20, 20, svg`<path d="M1 1h17v18H1z" fill="#5f6573"/><path d="M4 5h11M4 9h11M4 13h7" stroke="#ccd7f6" stroke-width="2"/>`))}
        ${v("大纲", false, pic(20, 20, svg`<path d="M1 1h18v18H1z" fill="#77717a"/><path d="M4 5h2M8 5h8M4 10h2M8 10h8M4 15h2M8 15h8" stroke="#efe9f1" stroke-width="2"/>`))}
        ${v("Web", false, pic(20, 20, svg`<path d="M1 1h15v18H1z" fill="#77717a"/><path d="M4 5h9M4 9h6" stroke="#efe9f1" stroke-width="2"/><circle cx="14" cy="15" r="5" fill="#e3dde6" stroke="#8a838c" stroke-width="1.500"/><path d="M11 14l3 1 1 3" stroke="#77717a"/>`))}
        ${v("护眼", false, pic(20, 20, svg`<path d="M0 0h20v20H0z" fill="#77717a"/><path d="M10 3q5 0 5 5 0 2-3 5v4H8v-4q-3-3-3-5 0-5 5-5z" fill="#efe9f1"/>`), true)}
        <span class="pct">160 %</span>
        <button aria-label="缩小">${pic(15, 20, svg`<path d="M0 10h15" stroke="#5f5a64" stroke-width="3"/>`)}</button>
        <input class="zoom" type="range" min="0" max="100" value="59" aria-label="显示比例" />
        <button aria-label="放大">${pic(15, 20, svg`<path d="M0 10h15M7.500 3v14" stroke="#5f5a64" stroke-width="3"/>`)}</button>
      </div>
    </footer>`;
  }
}

@customElement("task-bar")
class TaskBar extends LitElement {
  static styles = [base, css`
    .bar { display: flex; height: 15px; overflow: hidden; background: linear-gradient(90deg, #5b5672, #645d78 18%, #8d7382 38%, #a08693 60%, #8a7690 64%); }
    .app { width: 84px; height: 30px; flex: none; display: flex; justify-content: center; padding-top: 5px; margin-right: 4px; border: 1px solid #a898a8; border-bottom: 0; box-shadow: -1px 0 0 #6a5268; }
    .bare { width: 84px; border: 0; margin-right: 0; box-shadow: none; padding-top: 4px; }
    .lit { border-color: #f4eaf2; }
    .con { position: relative; margin-left: auto; width: 34%; background: #cb91a1; border-left: 12px solid #c08696; padding-left: 180px; font: 19px "Liberation Mono", monospace; line-height: 22px; color: #6c3b4b; white-space: pre; }
    .time { position: absolute; right: 44px; top: 8px; color: #fff; font: 16px "Noto Sans", sans-serif; line-height: 16px; }
  `];
  render() {
    const app = (p: unknown, lit = false) => html`<div class=${classMap({ app: true, lit })}>${pic(44, 24, p)}</div>`;
    const bare = (p: unknown) => html`<div class="app bare">${pic(44, 30, p)}</div>`;
    return html`<div class="bar">
      ${bare(svg`<path d="M0 9l12-2v8H0zM14 7l20-4v12H14z" fill="#f4f4f8"/>`)}
      ${bare(svg`<circle cx="18" cy="12" r="9" fill="#a4cc1c"/><circle cx="36" cy="12" r="9" fill="#3c8ede"/>`)}
      ${bare(svg`<circle cx="22" cy="17" r="16" fill="#cfe2f2"/><path d="M10 17q10-14 24-6v6z" fill="#3f92dc"/>`)}
      ${bare(svg`<path d="M12 20Q20 6 36 2q4 6-4 14" stroke="#e9b93c" stroke-width="4"/><path d="M16 15q8-9 16 0z" fill="#4ba4e4"/>`)}
      ${app(svg`<path d="M2 5h16l3 3h20v10H2z" fill="#ecdca0"/><path d="M4 3h4v7H4z" fill="#4b9a54"/>`)}
      ${app(svg`<circle cx="22" cy="16" r="14" fill="#e55240"/>`)}
      ${app(svg`<path d="M10 4q14-6 26 6v10H12z" fill="#d6d3da"/>`)}
      ${app(svg`<path d="M8 4l26-4 6 4v14H12z" fill="#55b3d2"/>`)}
      ${app(svg`<path d="M6 3h32v12H6z" fill="#9cc8ee"/><path d="M28 3h10v12H28z" fill="#3c7cc4"/>`)}
      ${app(svg`<path d="M4 0h14l-6 14H4z" fill="#1b68e4"/><circle cx="26" cy="10" r="7" stroke="#cbc8d4" stroke-width="3"/>`)}
      ${app(svg`<path d="M4 5h36v12H4z" fill="#553329"/>`)}
      ${app(svg`<path d="M4 0h18v16H4z" fill="#ea4565"/><path d="M20 8l10-8 10 12H20z" fill="#4563c4"/>`)}
      ${app(svg`<rect x="1" width="42" height="24" rx="6" fill="#36a8fa"/>`, true)}
      ${app(svg`<path d="M4 0h24v16H4z" fill="#f0eef2"/><path d="M28 8l10-8 2 6-8 6z" fill="#7c6a52"/>`)}
      <div class="con">$scala>sc.textFile("/home/centos/1.txt")<span class="time">15:01</span></div>
    </div>`;
  }
}

@customElement("player-bar")
class PlayerBar extends LitElement {
  static styles = [base, css`
    .bar { display: flex; align-items: center; height: 40px; background: #0b000d; color: #fff; padding: 2px 25px 0 16px; }
    .seek { appearance: none; flex: 1; min-width: 0; height: 20px; margin: 0 26px 0 18px; background: linear-gradient(90deg, #6f8e10 7%, #fff 7%) center / 100% 4px no-repeat; }
    .seek::-webkit-slider-thumb { appearance: none; width: 10px; height: 10px; border-radius: 50%; background: #fff; }
    .time { font: 13px "DejaVu Sans", sans-serif; width: 94px; white-space: nowrap; }
    .vol { margin-left: 26px; }
    .hd { font-size: 12px; margin: 0 24px 0 28px; }
  `];
  render() {
    return html`<div class="bar">
      <button aria-label="暂停">${pic(16, 20, svg`<path d="M0 1h5v18H0zM10 1h5v18h-5z" fill="#fff"/>`)}</button>
      <input class="seek" type="range" min="0" max="1000" value="68" aria-label="播放进度" />
      <span class="time">00:00 / 01:58</span>
      <button class="vol" aria-label="音量">${pic(26, 20, svg`<path d="M0 6h5l8-5v18l-8-5H0z" fill="#fff"/><path d="M16 7q2 3 0 6M18 5q4 5 0 10M21 3q5 7 0 14" stroke="#fff" stroke-width="1.500"/>`)}</button>
      <button class="hd">高清</button>
      <button aria-label="退出全屏">${pic(15, 16, svg`<path d="M1 2l4 4M5 2v4H1M14 2l-4 4M10 2v4h4M1 14l4-4M1 10h4v4M14 14l-4-4M10 14v-4h4" stroke="#fff" stroke-width="1.500"/>`)}</button>
    </div>`;
  }
}

@customElement("player-overlay")
class PlayerOverlay extends LitElement {
  static styles = [base, css`
    .layer { position: absolute; }
    .title { left: 20px; top: 20px; height: 32px; border-radius: 16px; background: rgba(52, 61, 68, .93); color: #fff; display: flex; align-items: center; gap: 8px; padding: 1px 11px 0 15px; font-size: 12px; white-space: nowrap; }
    .zoom { left: 836px; top: 20px; width: 248px; height: 32px; border-radius: 16px; background: rgba(52, 61, 68, .93); color: #fff; display: flex; padding: 4px; font-size: 12px; }
    .zoom button { flex: 1; border-radius: 12px; padding-top: 2px; }
    .zoom .on { background: #fff; color: #222; }
    .mark { right: 41px; top: 35px; font: 31px "Liberation Serif", "Noto Sans CJK SC", serif; line-height: 40px; color: #e01e28; text-shadow: 1px 1px 0 #3a2a2c; white-space: nowrap; }
    .logo { right: 15px; top: 34px; display: flex; gap: 10px; color: #5b9cc6; }
    .words { display: flex; flex-direction: column; }
    .cn { font-size: 29px; line-height: 36px; font-weight: 500; }
    .en { font-size: 21px; line-height: 18px; color: #6aaac4; }
    .stamp { left: 1549px; top: 489px; font: 11px "DejaVu Sans", sans-serif; color: #111; }
    .rail { right: 10px; top: 421px; width: 48px; display: flex; flex-direction: column; gap: 1px; background: #e8e8ea; color: #fff; font-size: 12px; border-radius: 0 0 3px 3px; overflow: hidden; }
    .rail button { height: 48px; display: flex; flex-direction: column; align-items: center; gap: 3px; padding-top: 4px; line-height: 16px; background: linear-gradient(90deg, #4b5459 0 45%, #38424b 55%); }
    .pull { right: 0; top: 541px; width: 10px; height: 142px; background: #3c7ad0; display: flex; align-items: center; padding-left: 3px; }
    .pull i { border: 4px solid transparent; border-right: 5px solid #fff; border-left: 0; }
    .ime { right: 1px; top: 912px; width: 240px; height: 32px; background: #fff; box-shadow: 0 0 2px #8f8a99; display: flex; align-items: center; justify-content: space-between; padding: 0 5px 0 27px; }
    .sogou { right: 220px; top: 905px; }
    .ball { right: -38px; top: 959px; width: 64px; height: 64px; border-radius: 50%; background: radial-gradient(circle at 35% 40%, #58c268, #2f9e48); border: 3px solid #e6e6ea; box-shadow: 0 0 3px #666; color: #fff; font: 700 15px "DejaVu Sans Mono", monospace; line-height: 55px; text-align: left; padding-left: 5px; }
  `];
  render() {
    const blue = "#2374c8";
    const items: [string, TemplateResult][] = [
      ["关灯", pic(24, 24, svg`<path d="M10 1h4l1 5q4 3 4 6 0 6-7 6t-7-6q0-3 4-6z" fill="#fff"/><path d="M12 6v6M10 12h4" stroke="#3b454d" stroke-width="1.500"/><path d="M1 12h2M21 12h2M3 19l2-1M21 19l-2-1M12 21v2" stroke="#fff" stroke-width="2"/>`)],
      ["画面", pic(24, 24, svg`<path d="M3 3h18v14H3z" stroke="#fff" stroke-width="3"/><path d="M7 18h10v2h2v3H5v-3h2z" fill="#fff"/>`)],
      ["宽屏", pic(24, 24, svg`<path d="M3 10h12v11H3zM11 3h10v10H11z" stroke="#fff" stroke-width="2"/>`)],
      ["截图", pic(24, 24, svg`<path d="M4 2l12 15M20 2L8 17" stroke="#fff" stroke-width="2.500"/><circle cx="6" cy="18" r="3" stroke="#fff" stroke-width="2"/><circle cx="18" cy="18" r="3" stroke="#fff" stroke-width="2"/>`)],
    ];
    return html`
      <div class="layer logo">${pic(42, 60, svg`<path d="M26 0q6 12 2 20-4 8-12 14-6 8 0 16 8 2 14-6-2 14-16 14Q0 56 1 42 3 28 18 20 24 14 26 0z" fill="#e0302c"/><path d="M33 20q9 10 3 22-4 8-14 12 12-14 11-34z" fill="#5e9ccc"/><path d="M28 28q-2 12-12 14 0-10 12-14z" fill="#8aa84a"/>`)}
        <div class="words"><span class="cn">龙果学院</span><span class="en">roncoo.com</span></div></div>
      <div class="layer mark">更多课程，请加qq:484683840</div>
      <div class="layer title">${pic(19, 19, svg`<rect x="2" y="2" width="15" height="15" rx="3" stroke="#fff" stroke-width="2"/><path d="M8 6l4 3.500-4 3.500z" fill="#fff"/>`)}<span>第22节：数据可视化只为什么要可视化</span></div>
      <div class="layer zoom"><button>50%</button><button>75%</button><button class="on">100%</button></div>
      <div class="layer stamp">48153321**005</div>
      <div class="layer pull"><i></i></div>
      <div class="layer rail">${items.map(([n, p]) => html`<button>${p}<span>${n}</span></button>`)}</div>
      <div class="layer ime">
        ${pic(22, 24, svg`<path d="M2 7h18v9H2z" stroke=${blue} stroke-width="3"/><path d="M11 2v20" stroke=${blue} stroke-width="3"/>`)}
        ${pic(20, 22, svg`<path d="M13 2q6 4 5 10-3 8-10 8-5 0-8-4 12 1 13-14z" fill=${blue}/>`)}
        ${pic(18, 20, svg`<circle cx="4" cy="5" r="2.500" stroke="#5fa0d8" stroke-width="1.500"/><path d="M12 8q5 0 4 6-1 4-4 5 1-3 0-5-2-1-2-3t2-3z" fill=${blue}/>`)}
        ${pic(24, 20, svg`<rect x="1" y="2" width="22" height="16" rx="2" fill=${blue}/><path d="M4 6h16M4 10h16" stroke="#fff" stroke-width="2" stroke-dasharray="2 1.500"/><path d="M6 14h12" stroke="#fff" stroke-width="2"/>`)}
        ${pic(24, 22, svg`<circle cx="9" cy="5" r="4" fill="#c3bccb"/><path d="M2 20q0-9 7-9 5 0 6 4v5z" fill="#c3bccb"/><path d="M10 12h12v8H10zM14 12v8M18 12v8" fill="#fff" stroke="#c3bccb" stroke-width="1.500"/>`)}
        ${pic(22, 22, svg`<path d="M6 2q5 4 10 0l5 4-2 5-3-1v11H6V10l-3 1-2-5z" fill=${blue}/>`)}
        ${pic(22, 22, svg`<path d="M2 18l9-9q-1-6 6-8l-1 5 3 2 3-2q0 8-8 8l-8 7q-4 0-4-3z" fill=${blue}/>`)}
      </div>
      <div class="layer sogou">${pic(42, 42, svg`<path d="M4 7L33 2q3 0 4 2l4 30q0 3-3 3L9 40q-3 0-3-2L1 10q0-3 3-3z" fill="#ec5a22"/><path d="M32 12q-10-3-18 0-6 5 1 8l12 2q6 3 1 7-8 3-18 1" stroke="#fff" stroke-width="5"/>`)}</div>
      <div class="layer ball">71</div>`;
  }
}

@customElement("app-root")
class AppRoot extends LitElement {
  static styles = css`
    :host { display: block; }
    .app { position: relative; height: 100vh; overflow: hidden; display: flex; flex-direction: column; font-family: "Noto Sans", "Noto Sans CJK SC", sans-serif; font-size: 17px; line-height: 1.3; }
    .work { flex: 1; min-height: 0; display: flex; align-items: stretch; background: #e3dcea; padding-right: 10px; }
  `;
  render() {
    return html`<div class="app">
      <title-bar></title-bar>
      <ribbon-bar></ribbon-bar>
      <file-tabs></file-tabs>
      <div class="work"><outline-panel></outline-panel><doc-view></doc-view></div>
      <status-bar></status-bar>
      <task-bar></task-bar>
      <player-bar></player-bar>
      <player-overlay></player-overlay>
    </div>`;
  }
}
